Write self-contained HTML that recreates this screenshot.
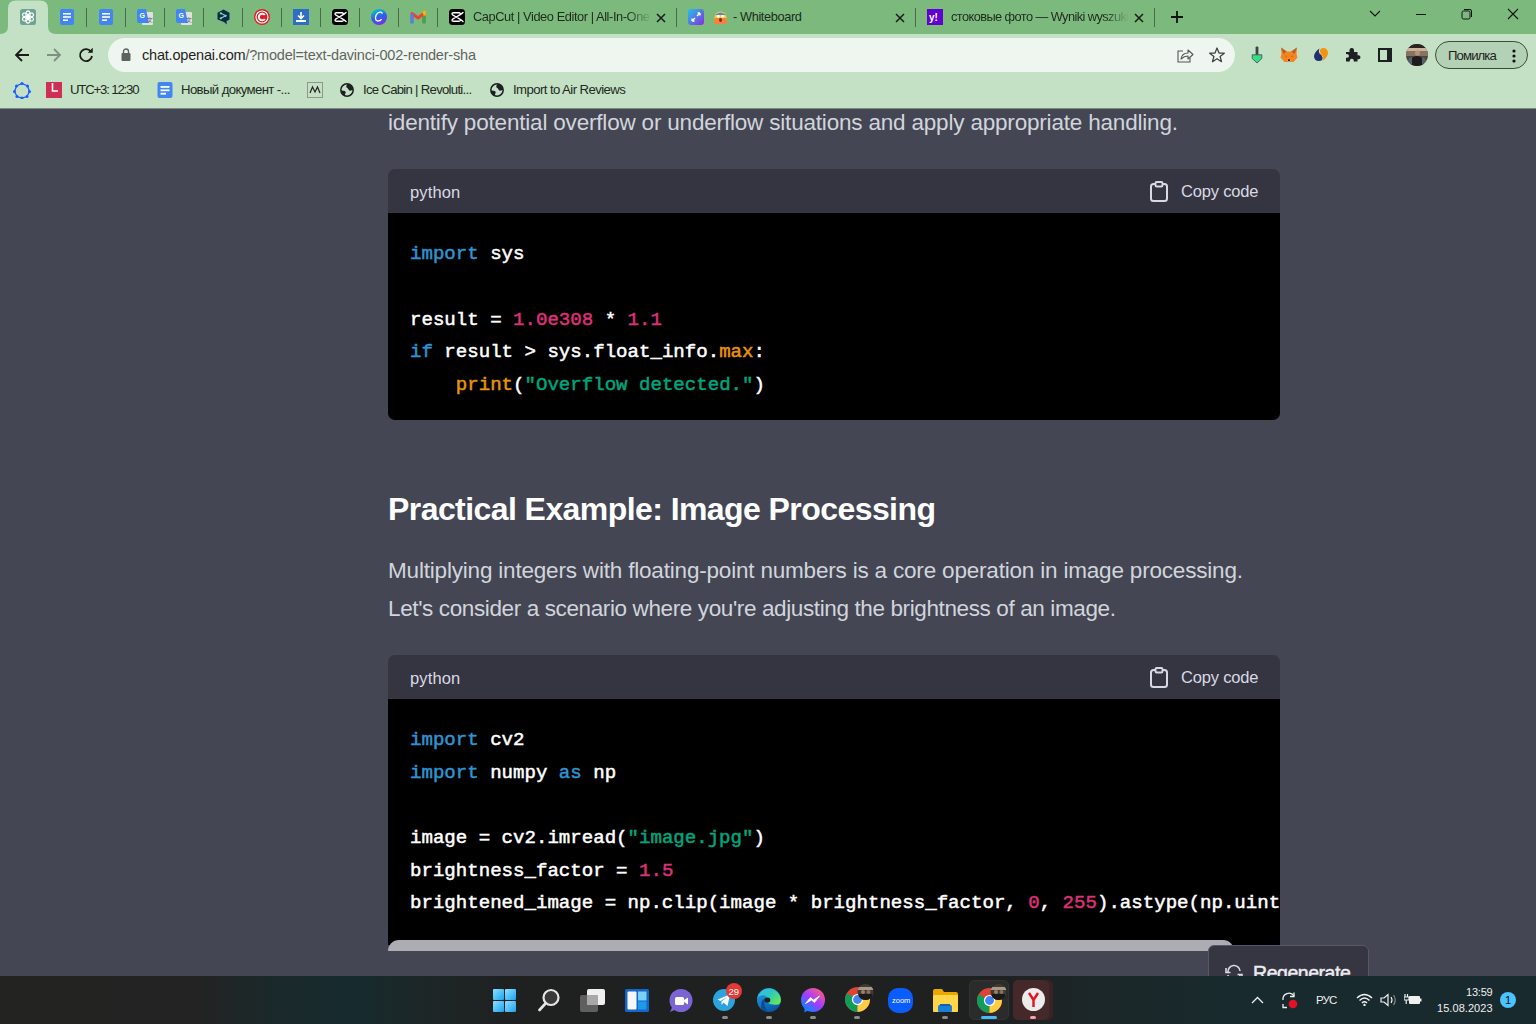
<!DOCTYPE html>
<html><head><meta charset="utf-8">
<style>
*{margin:0;padding:0;box-sizing:border-box}
html,body{width:1536px;height:1024px;overflow:hidden;background:#444654;font-family:"Liberation Sans",sans-serif}
.r{position:absolute;display:block}
.t{position:absolute;white-space:pre}
.kw{color:#2e95d3}.num{color:#df3079}.str{color:#00a67d}.bi{color:#e9950c}
</style></head><body>
<div class="r" style="left:0px;top:0px;width:1536px;height:34px;background:#7bba7c;"></div>
<svg class="r" style="left:0px;top:0px;" width="56" height="34" viewBox="0 0 56 34"><path d="M0 34 Q8 34 8 26 V8.5 Q8 0.5 16 0.5 H40 Q48 0.5 48 8.5 V26 Q48 34 56 34 Z" fill="#c4e1c5"/></svg>
<div class="r" style="left:86px;top:8px;width:1px;height:19px;background:#4a6a4b;"></div>
<div class="r" style="left:125px;top:8px;width:1px;height:19px;background:#4a6a4b;"></div>
<div class="r" style="left:164px;top:8px;width:1px;height:19px;background:#4a6a4b;"></div>
<div class="r" style="left:203px;top:8px;width:1px;height:19px;background:#4a6a4b;"></div>
<div class="r" style="left:242px;top:8px;width:1px;height:19px;background:#4a6a4b;"></div>
<div class="r" style="left:281px;top:8px;width:1px;height:19px;background:#4a6a4b;"></div>
<div class="r" style="left:320px;top:8px;width:1px;height:19px;background:#4a6a4b;"></div>
<div class="r" style="left:359px;top:8px;width:1px;height:19px;background:#4a6a4b;"></div>
<div class="r" style="left:398px;top:8px;width:1px;height:19px;background:#4a6a4b;"></div>
<div class="r" style="left:437px;top:8px;width:1px;height:19px;background:#4a6a4b;"></div>
<div class="r" style="left:676px;top:8px;width:1px;height:19px;background:#4a6a4b;"></div>
<div class="r" style="left:915px;top:8px;width:1px;height:19px;background:#4a6a4b;"></div>
<div class="r" style="left:1154px;top:8px;width:1px;height:19px;background:#4a6a4b;"></div>
<svg class="r" style="left:20px;top:9px;" width="16" height="16" viewBox="0 0 16 16"><rect width="16" height="16" rx="2.5" fill="#6fa495"/><g fill="none" stroke="#fff" stroke-width="1.1"><ellipse cx="8" cy="5.3" rx="2.1" ry="3.4" transform="rotate(0 8 8)"/><ellipse cx="8" cy="5.3" rx="2.1" ry="3.4" transform="rotate(60 8 8)"/><ellipse cx="8" cy="5.3" rx="2.1" ry="3.4" transform="rotate(120 8 8)"/><ellipse cx="8" cy="5.3" rx="2.1" ry="3.4" transform="rotate(180 8 8)"/><ellipse cx="8" cy="5.3" rx="2.1" ry="3.4" transform="rotate(240 8 8)"/><ellipse cx="8" cy="5.3" rx="2.1" ry="3.4" transform="rotate(300 8 8)"/></g></svg>
<svg class="r" style="left:59px;top:9px;" width="16" height="16" viewBox="0 0 16 16"><rect x="1" width="14" height="16" rx="2" fill="#4285f4"/><rect x="4" y="4" width="8" height="1.6" fill="#fff"/><rect x="4" y="7.2" width="8" height="1.6" fill="#fff"/><rect x="4" y="10.4" width="5" height="1.6" fill="#fff"/></svg>
<svg class="r" style="left:98px;top:9px;" width="16" height="16" viewBox="0 0 16 16"><rect x="1" width="14" height="16" rx="2" fill="#4285f4"/><rect x="4" y="4" width="8" height="1.6" fill="#fff"/><rect x="4" y="7.2" width="8" height="1.6" fill="#fff"/><rect x="4" y="10.4" width="5" height="1.6" fill="#fff"/></svg>
<svg class="r" style="left:137px;top:9px;" width="16" height="16" viewBox="0 0 16 16"><rect x="5" y="3" width="11" height="13" rx="1" fill="#e0e0e0"/><path d="M0 2 Q0 0 2 0 H9 L12 14 H2 Q0 14 0 12Z" fill="#4285f4"/><text x="2.5" y="9" font-size="7" font-weight="bold" fill="#fff" font-family="Liberation Sans">G</text><text x="9.5" y="13" font-size="6" fill="#555" font-family="Liberation Sans">文</text></svg>
<svg class="r" style="left:176px;top:9px;" width="16" height="16" viewBox="0 0 16 16"><rect x="5" y="3" width="11" height="13" rx="1" fill="#e0e0e0"/><path d="M0 2 Q0 0 2 0 H9 L12 14 H2 Q0 14 0 12Z" fill="#4285f4"/><text x="2.5" y="9" font-size="7" font-weight="bold" fill="#fff" font-family="Liberation Sans">G</text><text x="9.5" y="13" font-size="6" fill="#555" font-family="Liberation Sans">文</text></svg>
<svg class="r" style="left:217px;top:9px;" width="13" height="16" viewBox="0 0 13 16"><path d="M6.5 0.5 L12.5 3.8 V10.5 L9.5 12.2 L9.8 15.5 L7 13 L0.5 10.5 V3.8Z" fill="#0a2b4e"/><path d="M3.8 4.3 L8.6 6.8 L3.8 9.3" stroke="#8fd39a" stroke-width="1.2" fill="none"/><circle cx="3.8" cy="4.3" r="1.1" fill="#8fd39a"/><circle cx="8.6" cy="6.8" r="1.1" fill="#8fd39a"/><circle cx="3.8" cy="9.3" r="1.1" fill="#8fd39a"/></svg>
<svg class="r" style="left:254px;top:9px;" width="16" height="16" viewBox="0 0 16 16"><circle cx="8" cy="8" r="8" fill="#e21c23"/><circle cx="8" cy="8" r="6" fill="none" stroke="#fff" stroke-width="1.2"/><path d="M10.8 6 A3.3 3.3 0 1 0 10.8 10" fill="none" stroke="#fff" stroke-width="2"/></svg>
<svg class="r" style="left:293px;top:9px;" width="16" height="16" viewBox="0 0 16 16"><rect width="16" height="16" fill="#2f6ec7"/><path d="M8 3 V9 M5 6.5 L8 9.5 L11 6.5" stroke="#fff" stroke-width="1.6" fill="none"/><rect x="3" y="11" width="10" height="2" fill="#fff"/></svg>
<svg class="r" style="left:332px;top:9px;" width="16" height="16" viewBox="0 0 16 16"><rect width="16" height="16" rx="3.5" fill="#000"/><path d="M11.3 4.6 Q11 3.7 10 3.7 H4.5 Q3 3.7 3 4.8 Q3 5.6 4 6.2 L7.2 8 L10.4 9.8 Q12.5 11 14 12.4 M11.3 11.4 Q11 12.3 10 12.3 H4.5 Q3 12.3 3 11.2 Q3 10.4 4 9.8 L7.2 8 L10.4 6.2 Q12.5 5 14 3.6" stroke="#fff" stroke-width="1.4" fill="none" stroke-linecap="round"/></svg>
<svg class="r" style="left:371px;top:9px;" width="16" height="16" viewBox="0 0 16 16"><defs><linearGradient id="cg" x1="0.3" y1="0" x2="0.7" y2="1"><stop offset="0" stop-color="#00c4cc"/><stop offset="0.5" stop-color="#2f5ee8"/><stop offset="1" stop-color="#7d2ae8"/></linearGradient></defs><circle cx="8" cy="8" r="8" fill="url(#cg)"/><path d="M11.2 4.8 Q11 2.8 9 3.2 Q5 4 4.5 8.5 Q4.3 12 7 12 Q9 12 10.6 10.2" stroke="#fff" stroke-width="1.3" fill="none"/></svg>
<svg class="r" style="left:410px;top:10px;" width="16" height="14" viewBox="0 0 16 14"><path d="M2 13 V3.5 L8 8 L14 3.5 V13" fill="none" stroke="#ea4335" stroke-width="3" stroke-linejoin="round"/><path d="M2 13.5 V4" stroke="#4285f4" stroke-width="3"/><path d="M14 13.5 V6" stroke="#34a853" stroke-width="3"/><path d="M12.8 3 L14.5 2.2 V5.5" stroke="#fbbc04" stroke-width="2.4" fill="none"/></svg>
<svg class="r" style="left:449px;top:9px;" width="16" height="16" viewBox="0 0 16 16"><rect width="16" height="16" rx="3.5" fill="#000"/><path d="M11.3 4.6 Q11 3.7 10 3.7 H4.5 Q3 3.7 3 4.8 Q3 5.6 4 6.2 L7.2 8 L10.4 9.8 Q12.5 11 14 12.4 M11.3 11.4 Q11 12.3 10 12.3 H4.5 Q3 12.3 3 11.2 Q3 10.4 4 9.8 L7.2 8 L10.4 6.2 Q12.5 5 14 3.6" stroke="#fff" stroke-width="1.4" fill="none" stroke-linecap="round"/></svg>
<div class="r" style="left:440px;top:0;width:212px;height:34px;overflow:hidden;-webkit-mask-image:linear-gradient(90deg,#000 88%,transparent 100%)">
<div class="t" style="left:33px;top:10.66px;font-size:12.8px;line-height:12.8px;color:#1f2a1f;font-family:'Liberation Sans',sans-serif;font-weight:400;letter-spacing:-0.415px;">CapCut | Video Editor | All-In-One Editor</div>
</div>
<svg class="r" style="left:656px;top:12.5px;" width="10" height="10" viewBox="0 0 10 10"><path d="M1 1 L9 9 M9 1 L1 9" stroke="#1a1a1a" stroke-width="1.5"/></svg>
<svg class="r" style="left:688px;top:9px;" width="16" height="16" viewBox="0 0 16 16"><defs><linearGradient id="wg" x1="0" y1="0" x2="1" y2="1"><stop offset="0" stop-color="#1ec6e6"/><stop offset="1" stop-color="#8a2be2"/></linearGradient></defs><rect width="16" height="16" rx="3" fill="url(#wg)"/><path d="M4 12 L7 9 M4 12 V9.5 M4 12 H6.5 M12 4 L9 7 M12 4 V6.5 M12 4 H9.5" stroke="#fff" stroke-width="1.3" fill="none"/></svg>
<svg class="r" style="left:714px;top:11px;" width="13" height="13" viewBox="0 0 13 13"><circle cx="6.5" cy="6.5" r="6" fill="#ffc83d"/><rect x="0" y="7" width="13" height="6" rx="2" fill="#f7813d"/><ellipse cx="6.5" cy="9" rx="1.5" ry="2" fill="#7a2a1a"/><circle cx="4.3" cy="5.3" r="1.4" fill="#fff"/><circle cx="8.7" cy="5.3" r="1.4" fill="#fff"/><path d="M1 4 Q6.5 -1 12 4" fill="#4a8ad8"/></svg>
<div class="t" style="left:733px;top:10.66px;font-size:12.8px;line-height:12.8px;color:#1f2a1f;font-family:'Liberation Sans',sans-serif;font-weight:400;letter-spacing:-0.400px;">- Whiteboard</div>
<svg class="r" style="left:895px;top:12.5px;" width="10" height="10" viewBox="0 0 10 10"><path d="M1 1 L9 9 M9 1 L1 9" stroke="#1a1a1a" stroke-width="1.5"/></svg>
<svg class="r" style="left:927px;top:9px;" width="16" height="16" viewBox="0 0 16 16"><rect width="16" height="16" fill="#6001d2"/><text x="2" y="12" font-size="10" font-weight="bold" fill="#fff" font-family="Liberation Sans">y!</text></svg>
<div class="r" style="left:920px;top:0;width:209px;height:34px;overflow:hidden;-webkit-mask-image:linear-gradient(90deg,#000 88%,transparent 100%)">
<div class="t" style="left:31px;top:10.66px;font-size:12.8px;line-height:12.8px;color:#1f2a1f;font-family:'Liberation Sans',sans-serif;font-weight:400;letter-spacing:-0.575px;">стоковые фото — Wyniki wyszukiwania</div>
</div>
<svg class="r" style="left:1134px;top:12.5px;" width="10" height="10" viewBox="0 0 10 10"><path d="M1 1 L9 9 M9 1 L1 9" stroke="#1a1a1a" stroke-width="1.5"/></svg>
<svg class="r" style="left:1171px;top:11px;" width="12" height="12" viewBox="0 0 12 12"><path d="M6 0 V12 M0 6 H12" stroke="#111" stroke-width="1.8"/></svg>
<svg class="r" style="left:1369px;top:10px;" width="12" height="8" viewBox="0 0 12 8"><path d="M1 1 L6 6 L11 1" stroke="#111" stroke-width="1.1" fill="none"/></svg>
<div class="r" style="left:1416px;top:14px;width:10px;height:1px;background:#111;"></div>
<svg class="r" style="left:1461px;top:8px;" width="12" height="12" viewBox="0 0 12 12"><rect x="1" y="3" width="8" height="8" rx="1.5" fill="none" stroke="#111" stroke-width="1"/><path d="M3 1.5 H9 Q10.5 1.5 10.5 3 V9" fill="none" stroke="#111" stroke-width="1"/></svg>
<svg class="r" style="left:1507px;top:8px;" width="12" height="12" viewBox="0 0 12 12"><path d="M1 1 L11 11 M11 1 L1 11" stroke="#111" stroke-width="1.1"/></svg>
<div class="r" style="left:0px;top:34px;width:1536px;height:74px;background:#c4e1c5;"></div>
<svg class="r" style="left:14px;top:47px;" width="16" height="16" viewBox="0 0 16 16"><path d="M15 8 H2 M8 2 L2 8 L8 14" stroke="#1a1a1a" stroke-width="1.8" fill="none"/></svg>
<svg class="r" style="left:46px;top:47px;" width="16" height="16" viewBox="0 0 16 16"><path d="M1 8 H14 M8 2 L14 8 L8 14" stroke="#7f8f80" stroke-width="1.8" fill="none"/></svg>
<svg class="r" style="left:78px;top:47px;" width="16" height="16" viewBox="0 0 16 16"><path d="M13.2 5 A6 6 0 1 0 14 9" stroke="#1a1a1a" stroke-width="1.8" fill="none"/><path d="M10 5.5 H14.5 V1" fill="#1a1a1a" stroke="#1a1a1a" stroke-width="0.5"/></svg>
<div class="r" style="left:108px;top:38px;width:1127px;height:34px;background:#eff6ef;border-radius:17px"></div>
<svg class="r" style="left:121px;top:48px;" width="10" height="13" viewBox="0 0 10 13"><rect x="0.5" y="5" width="9" height="8" rx="1" fill="#5f635f"/><path d="M2.5 5 V3.5 A2.5 2.5 0 0 1 7.5 3.5 V5" stroke="#5f635f" stroke-width="1.4" fill="none"/></svg>
<div class="t" style="left:142px;top:47.72px;font-size:14.5px;line-height:14.5px;color:#1f1f1f;font-family:'Liberation Sans',sans-serif;font-weight:400;letter-spacing:-0.200px;"><span style="color:#1f1f1f">chat.openai.com</span><span style="color:#5f6660">/?model=text-davinci-002-render-sha</span></div>
<svg class="r" style="left:1176px;top:47px;" width="18" height="16" viewBox="0 0 18 16"><path d="M7 4 H2 V15 H14 V11" stroke="#555" stroke-width="1.1" fill="none"/><path d="M5 12 Q6 6 12 6 V3 L17 7.5 L12 12 V9 Q8 9 5 12Z" stroke="#555" stroke-width="1.1" fill="none" stroke-linejoin="round"/></svg>
<svg class="r" style="left:1209px;top:47px;" width="16" height="16" viewBox="0 0 16 16"><path d="M8 1 L10 6 L15.3 6.2 L11.1 9.5 L12.5 14.7 L8 11.7 L3.5 14.7 L4.9 9.5 L0.7 6.2 L6 6 Z" stroke="#444" stroke-width="1.3" fill="none" stroke-linejoin="round"/></svg>
<svg class="r" style="left:1251px;top:46px;" width="12" height="18" viewBox="0 0 12 18"><rect x="4.6" y="0.5" width="2.8" height="9" rx="1" fill="#3c4448"/><path d="M1.2 8.8 H10.8 V12.5 L6 17 L1.2 12.5Z" fill="#2fe37d" stroke="#5a4a6a" stroke-width="0.9" stroke-linejoin="round"/></svg>
<svg class="r" style="left:1280px;top:47px;" width="18" height="16" viewBox="0 0 18 16"><path d="M1 0.5 L7 4.5 H11 L17 0.5 L16.5 7 L17.5 10.5 L13.5 15 H4.5 L0.5 10.5 L1.5 7Z" fill="#f5841f"/><path d="M1 0.5 L6.5 4.5 L3.5 7Z M17 0.5 L11.5 4.5 L14.5 7Z" fill="#b0602a"/><path d="M7 13 L9 15.5 L11 13Z" fill="#d9c0a8"/><circle cx="9" cy="13.3" r="1" fill="#111"/><path d="M5 9 L7 9.5 M13 9 L11 9.5" stroke="#c06a2a" stroke-width="1"/></svg>
<svg class="r" style="left:1313px;top:47px;" width="16" height="15" viewBox="0 0 16 15"><path d="M6.5 1.5 Q2 4 1 9 Q1 14 6 14 Q10 14 9.5 10.5 Q9 8 6.5 6.5 Q5 4 6.5 1.5Z" fill="#23306e"/><path d="M9.5 13.8 Q14 11 15 6.5 Q15 1 10 1 Q6.5 1.5 7 4.5 Q7.5 7 9.5 8.5 Q11 10.5 9.5 13.8Z" fill="#f7900a"/></svg>
<svg class="r" style="left:1345px;top:47px;" width="16" height="15" viewBox="0 0 16 15"><path d="M1 5 H4.5 Q4 1 6.8 1 Q9.5 1 9 5 H12.5 V8.2 Q15.5 7.8 15.5 10.2 Q15.5 12.6 12.5 12.2 V14.5 H8.8 Q9 11.8 6.8 11.8 Q4.6 11.8 4.8 14.5 H1 V10.8 Q4 11 4 8.9 Q4 6.8 1 7Z" fill="#1e1f22"/></svg>
<svg class="r" style="left:1378px;top:48px;" width="14" height="14" viewBox="0 0 14 14"><rect x="1" y="1" width="12" height="12" fill="none" stroke="#1e1f22" stroke-width="2"/><rect x="9" y="1" width="4" height="12" fill="#1e1f22"/></svg>
<svg class="r" style="left:1406px;top:44px;" width="22" height="22" viewBox="0 0 22 22"><defs><clipPath id="av"><circle cx="11" cy="11" r="11"/></clipPath></defs><g clip-path="url(#av)"><rect width="22" height="22" fill="#4a463c"/><rect y="0" width="22" height="4" fill="#2a2420"/><rect y="4" width="22" height="3" fill="#c8b49a"/><rect y="7" width="22" height="5" fill="#8a7260"/><circle cx="11.5" cy="9" r="2.6" fill="#b89080"/><path d="M4 22 Q4 12 11 12 Q18 12 18 22Z" fill="#1d1d1d"/><path d="M1 22 L3 14 L6 13 L6 22Z M21 22 L19 14 L16 13 L16 22Z" fill="#50646a"/></g></svg>
<div class="r" style="left:1435px;top:41px;width:93px;height:28px;background:#b3d1b5;border:1px solid #3e4a3e;border-radius:14px"></div>
<div class="t" style="left:1448px;top:48.82px;font-size:13.2px;line-height:13.2px;color:#1f1f1f;font-family:'Liberation Sans',sans-serif;font-weight:400;letter-spacing:-0.917px;">Помилка</div>
<svg class="r" style="left:1511px;top:49px;" width="6" height="14" viewBox="0 0 6 14"><circle cx="3" cy="2" r="1.6" fill="#111"/><circle cx="3" cy="7" r="1.6" fill="#111"/><circle cx="3" cy="12" r="1.6" fill="#111"/></svg>
<svg class="r" style="left:13px;top:82px;" width="18" height="17" viewBox="0 0 18 17"><polygon points="9,1.5 14.5,4 16.5,9.5 14,14.5 9,16 4,14.5 1.5,9.5 3.5,4" fill="none" stroke="#1a5cff" stroke-width="1.3"/><g fill="#1a5cff"><circle cx="9" cy="1.5" r="1.5"/><circle cx="14.5" cy="4" r="1.5"/><circle cx="16.5" cy="9.5" r="1.5"/><circle cx="14" cy="14.5" r="1.5"/><circle cx="9" cy="16" r="1.5"/><circle cx="4" cy="14.5" r="1.5"/><circle cx="1.5" cy="9.5" r="1.5"/><circle cx="3.5" cy="4" r="1.5"/></g></svg>
<svg class="r" style="left:46px;top:82px;" width="16" height="16" viewBox="0 0 16 16"><rect width="16" height="16" fill="#cf2f55"/><path d="M6.5 1 V9 H12" stroke="#fff" stroke-width="1.6" fill="none"/></svg>
<div class="t" style="left:70px;top:83.32px;font-size:13.2px;line-height:13.2px;color:#1f2a20;font-family:'Liberation Sans',sans-serif;font-weight:400;letter-spacing:-1.173px;">UTC+3: 12:30</div>
<svg class="r" style="left:157px;top:82px;" width="16" height="16" viewBox="0 0 16 16"><rect x="0.5" width="15" height="16" rx="2" fill="#4285f4"/><rect x="3.5" y="4" width="9" height="1.8" fill="#fff"/><rect x="3.5" y="7.4" width="9" height="1.8" fill="#fff"/><rect x="3.5" y="10.8" width="5.5" height="1.8" fill="#fff"/></svg>
<div class="t" style="left:181px;top:83.32px;font-size:13.2px;line-height:13.2px;color:#1f2a20;font-family:'Liberation Sans',sans-serif;font-weight:400;letter-spacing:-0.622px;">Новый документ -...</div>
<svg class="r" style="left:307px;top:82px;" width="16" height="16" viewBox="0 0 16 16"><rect x="0.5" y="0.5" width="15" height="15" fill="none" stroke="#8a9a8a" stroke-width="1"/><path d="M3 11 L5.5 5 L8 10 L10.5 5 L13 11" stroke="#222" stroke-width="1.2" fill="none"/></svg>
<svg class="r" style="left:340px;top:83px;" width="14" height="14" viewBox="0 0 14 14"><circle cx="7" cy="7" r="6.2" fill="none" stroke="#1e1f22" stroke-width="1.5"/><path d="M7.5 0.8 Q5.8 3 6.3 4.3 Q8 5 8.5 6.5 Q9.5 8.2 10.8 7.6 Q12 7 13.2 7 A6.2 6.2 0 0 0 7.5 0.8Z" fill="#1e1f22"/><path d="M0.8 7.5 Q3.5 7.4 4.9 8 Q6.1 8.8 5.6 10 Q4.6 11 5.2 13 A6.2 6.2 0 0 1 0.8 7.5Z" fill="#1e1f22"/></svg>
<div class="t" style="left:363px;top:83.32px;font-size:13.2px;line-height:13.2px;color:#1f2a20;font-family:'Liberation Sans',sans-serif;font-weight:400;letter-spacing:-0.727px;">Ice Cabin | Revoluti...</div>
<svg class="r" style="left:490px;top:83px;" width="14" height="14" viewBox="0 0 14 14"><circle cx="7" cy="7" r="6.2" fill="none" stroke="#1e1f22" stroke-width="1.5"/><path d="M7.5 0.8 Q5.8 3 6.3 4.3 Q8 5 8.5 6.5 Q9.5 8.2 10.8 7.6 Q12 7 13.2 7 A6.2 6.2 0 0 0 7.5 0.8Z" fill="#1e1f22"/><path d="M0.8 7.5 Q3.5 7.4 4.9 8 Q6.1 8.8 5.6 10 Q4.6 11 5.2 13 A6.2 6.2 0 0 1 0.8 7.5Z" fill="#1e1f22"/></svg>
<div class="t" style="left:513px;top:83.32px;font-size:13.2px;line-height:13.2px;color:#1f2a20;font-family:'Liberation Sans',sans-serif;font-weight:400;letter-spacing:-0.585px;">Import to Air Reviews</div>
<div class="r" style="left:0px;top:108px;width:1536px;height:868px;background:#444654;"></div>
<div class="r" style="left:0px;top:108px;width:1536px;height:1px;background:#7d8a84;"></div>
<div class="t" style="left:388px;top:112.45px;font-size:22.5px;line-height:22.5px;color:#d1d5db;font-family:'Liberation Sans',sans-serif;font-weight:400;letter-spacing:-0.189px;">identify potential overflow or underflow situations and apply appropriate handling.</div>
<div class="r" style="left:388px;top:169px;width:892px;height:44px;background:#343541;border-radius:7px 7px 0 0"></div>
<div class="t" style="left:410px;top:183.53px;font-size:16.5px;line-height:16.5px;color:#d9d9e3;font-family:'Liberation Sans',sans-serif;font-weight:400;letter-spacing:0.140px;">python</div>
<svg class="r" style="left:1150px;top:181px;" width="18" height="21" viewBox="0 0 18 21"><rect x="1" y="3" width="16" height="17" rx="2.5" fill="none" stroke="#d9d9e3" stroke-width="2"/><rect x="5.5" y="1" width="7" height="4.5" rx="1.2" fill="#343541" stroke="#d9d9e3" stroke-width="2"/></svg>
<div class="t" style="left:1181px;top:183.03px;font-size:16.5px;line-height:16.5px;color:#d9d9e3;font-family:'Liberation Sans',sans-serif;font-weight:400;letter-spacing:-0.188px;">Copy code</div>
<div class="r" style="left:388px;top:213px;width:892px;height:207px;background:#000;border-radius:0 0 7px 7px"></div>
<div class="r" style="left:388px;top:213px;width:892px;height:207px;overflow:hidden">
<div class="t" style="left:22px;top:32.38px;font-size:19.08px;line-height:19.08px;color:#fff;font-family:'Liberation Mono',monospace;font-weight:400;-webkit-text-stroke:0.5px;"><span class="kw">import</span> sys</div>
<div class="t" style="left:22px;top:97.58px;font-size:19.08px;line-height:19.08px;color:#fff;font-family:'Liberation Mono',monospace;font-weight:400;-webkit-text-stroke:0.5px;">result = <span class="num">1.0e308</span> * <span class="num">1.1</span></div>
<div class="t" style="left:22px;top:130.18px;font-size:19.08px;line-height:19.08px;color:#fff;font-family:'Liberation Mono',monospace;font-weight:400;-webkit-text-stroke:0.5px;"><span class="kw">if</span> result &gt; sys.float_info.<span class="bi">max</span>:</div>
<div class="t" style="left:22px;top:162.78px;font-size:19.08px;line-height:19.08px;color:#fff;font-family:'Liberation Mono',monospace;font-weight:400;-webkit-text-stroke:0.5px;">    <span class="bi">print</span>(<span class="str">"Overflow detected."</span>)</div>
</div>
<div class="t" style="left:388px;top:492.91px;font-size:32px;line-height:32px;color:#ffffff;font-family:'Liberation Sans',sans-serif;font-weight:700;letter-spacing:-0.571px;">Practical Example: Image Processing</div>
<div class="t" style="left:388px;top:559.95px;font-size:22.5px;line-height:22.5px;color:#d1d5db;font-family:'Liberation Sans',sans-serif;font-weight:400;letter-spacing:-0.190px;">Multiplying integers with floating-point numbers is a core operation in image processing.</div>
<div class="t" style="left:388px;top:598.25px;font-size:22.5px;line-height:22.5px;color:#d1d5db;font-family:'Liberation Sans',sans-serif;font-weight:400;letter-spacing:-0.381px;">Let&#x27;s consider a scenario where you&#x27;re adjusting the brightness of an image.</div>
<div class="r" style="left:388px;top:655px;width:892px;height:44px;background:#343541;border-radius:7px 7px 0 0"></div>
<div class="t" style="left:410px;top:669.53px;font-size:16.5px;line-height:16.5px;color:#d9d9e3;font-family:'Liberation Sans',sans-serif;font-weight:400;letter-spacing:0.140px;">python</div>
<svg class="r" style="left:1150px;top:667px;" width="18" height="21" viewBox="0 0 18 21"><rect x="1" y="3" width="16" height="17" rx="2.5" fill="none" stroke="#d9d9e3" stroke-width="2"/><rect x="5.5" y="1" width="7" height="4.5" rx="1.2" fill="#343541" stroke="#d9d9e3" stroke-width="2"/></svg>
<div class="t" style="left:1181px;top:669.03px;font-size:16.5px;line-height:16.5px;color:#d9d9e3;font-family:'Liberation Sans',sans-serif;font-weight:400;letter-spacing:-0.188px;">Copy code</div>
<div class="r" style="left:388px;top:699px;width:892px;height:400px;background:#000;"></div>
<div class="r" style="left:388px;top:699px;width:892px;height:400px;overflow:hidden">
<div class="t" style="left:22px;top:32.38px;font-size:19.08px;line-height:19.08px;color:#fff;font-family:'Liberation Mono',monospace;font-weight:400;-webkit-text-stroke:0.5px;"><span class="kw">import</span> cv2</div>
<div class="t" style="left:22px;top:64.98px;font-size:19.08px;line-height:19.08px;color:#fff;font-family:'Liberation Mono',monospace;font-weight:400;-webkit-text-stroke:0.5px;"><span class="kw">import</span> numpy <span class="kw">as</span> np</div>
<div class="t" style="left:22px;top:130.18px;font-size:19.08px;line-height:19.08px;color:#fff;font-family:'Liberation Mono',monospace;font-weight:400;-webkit-text-stroke:0.5px;">image = cv2.imread(<span class="str">"image.jpg"</span>)</div>
<div class="t" style="left:22px;top:162.78px;font-size:19.08px;line-height:19.08px;color:#fff;font-family:'Liberation Mono',monospace;font-weight:400;-webkit-text-stroke:0.5px;">brightness_factor = <span class="num">1.5</span></div>
<div class="t" style="left:22px;top:195.38px;font-size:19.08px;line-height:19.08px;color:#fff;font-family:'Liberation Mono',monospace;font-weight:400;-webkit-text-stroke:0.5px;">brightened_image = np.clip(image * brightness_factor, <span class="num">0</span>, <span class="num">255</span>).astype(np.uint8)</div>
</div>
<div class="r" style="left:0px;top:945px;width:1536px;height:31px;background:#444654;"></div>
<div class="r" style="left:388px;top:940px;width:846px;height:22px;background:#acacb2;border-radius:11px"></div>
<div class="r" style="left:0px;top:951px;width:1536px;height:25px;background:#444654;"></div>
<div class="r" style="left:1208px;top:945px;width:161px;height:50px;background:#353641;border:1px solid #565869;border-radius:6px"></div>
<svg class="r" style="left:1225px;top:963.5px;" width="18" height="18" viewBox="0 0 18 18"><path d="M3 8 A6 6 0 0 1 15 7" stroke="#d9d9e3" stroke-width="1.6" fill="none"/><path d="M15 11 A6 6 0 0 1 3 11" stroke="#d9d9e3" stroke-width="1.6" fill="none"/><path d="M1 4 V8.5 H5.5 M17 15 V10.5 H12.5" stroke="#d9d9e3" stroke-width="1.6" fill="none"/></svg>
<div class="t" style="left:1253px;top:964.49px;font-size:19.5px;line-height:19.5px;color:#ececf1;font-family:'Liberation Sans',sans-serif;font-weight:400;-webkit-text-stroke:0.45px;letter-spacing:-0.456px;">Regenerate</div>
<div class="r" style="left:0;top:976px;width:1536px;height:48px;background:linear-gradient(90deg,#232322 0%,#222322 13%,#1a292b 18%,#172b2e 23%,#1d2626 28%,#1f2121 33%,#1f2020 64%,#1b2729 72%,#182a2d 80%,#182a2d 100%)"></div>
<svg class="r" style="left:493px;top:989px;" width="23" height="23" viewBox="0 0 23 23"><defs><linearGradient id="wl" x1="0" y1="0" x2="1" y2="1"><stop offset="0" stop-color="#8ee0ff"/><stop offset="1" stop-color="#1aa3f0"/></linearGradient></defs><rect x="0" y="0" width="11" height="11" rx="1" fill="url(#wl)"/><rect x="12" y="0" width="11" height="11" rx="1" fill="url(#wl)"/><rect x="0" y="12" width="11" height="11" rx="1" fill="url(#wl)"/><rect x="12" y="12" width="11" height="11" rx="1" fill="url(#wl)"/></svg>
<svg class="r" style="left:538px;top:988px;" width="22" height="24" viewBox="0 0 22 24"><circle cx="13" cy="9.5" r="7.5" fill="#3a3a3a" stroke="#e6e6e6" stroke-width="2.2"/><path d="M7.5 15.5 L1.5 22" stroke="#e6e6e6" stroke-width="2.6" stroke-linecap="round"/></svg>
<svg class="r" style="left:580px;top:989px;" width="25" height="23" viewBox="0 0 25 23"><rect x="0" y="6" width="18" height="17" rx="2" fill="#5f5f5f"/><rect x="7" y="0" width="18" height="16" rx="2" fill="#f0f0f0"/><rect x="7" y="6" width="11" height="10" fill="#a8a8a8"/></svg>
<svg class="r" style="left:625px;top:989px;" width="24" height="23" viewBox="0 0 24 23"><rect width="24" height="23" rx="1.5" fill="#1466c9"/><rect x="2.5" y="2.5" width="9" height="18" rx="1" fill="#f6f6f6"/><rect x="13" y="2.5" width="8.5" height="9" fill="#79d2f5"/><rect x="13" y="12.5" width="8.5" height="8" fill="#1b9bea"/></svg>
<svg class="r" style="left:669px;top:989px;" width="24" height="24" viewBox="0 0 24 24"><circle cx="12" cy="11.5" r="11.5" fill="#7b64d4"/><path d="M1 23 L4 16 L8 20Z" fill="#7b64d4"/><rect x="6" y="8" width="9" height="8" rx="1.5" fill="#fff"/><path d="M15 11 L19 8.5 V15.5 L15 13Z" fill="#fff"/></svg>
<svg class="r" style="left:713px;top:989px;" width="22" height="22" viewBox="0 0 22 22"><circle cx="11" cy="11" r="11" fill="#2aa3df"/><path d="M4.5 10.5 L17 5.5 L14.5 17 L10.5 13.5 L8.5 16 L8.5 12.5 L15 7.5 L7.5 12 Z" fill="#fff"/></svg>
<svg class="r" style="left:726px;top:983px;" width="16" height="16" viewBox="0 0 16 16"><circle cx="8" cy="8" r="8" fill="#e53935"/></svg>
<div class="t" style="left:728.5px;top:986.96px;font-size:9.5px;line-height:9.5px;color:#fff;font-family:'Liberation Sans',sans-serif;font-weight:400;">29</div>
<svg class="r" style="left:757px;top:988px;" width="24" height="24" viewBox="0 0 24 24"><defs><linearGradient id="eb" x1="0" y1="0" x2="0.6" y2="1"><stop offset="0" stop-color="#2aa0e8"/><stop offset="1" stop-color="#0b56a6"/></linearGradient><linearGradient id="eg2" x1="0" y1="0" x2="1" y2="0.6"><stop offset="0" stop-color="#33bdf0"/><stop offset="0.55" stop-color="#2ec7c0"/><stop offset="1" stop-color="#62e65a"/></linearGradient></defs><circle cx="12" cy="12" r="12" fill="url(#eb)"/><path d="M4 20 Q6.5 23.5 12 24 Q8 21 7.5 16 Q7.5 12 10 10 Q6 10.5 4.5 14Z" fill="#0a4d96"/><path d="M0.2 10.5 A12 12 0 0 1 24 12 Q23.8 15.5 21.5 16.5 Q17 17.2 13 16 Q9.8 14.8 10.2 11.8 Q10.5 8.8 8 7.5 Q3 6.2 0.2 10.5Z" fill="url(#eg2)"/><ellipse cx="10.5" cy="12" rx="2.8" ry="2.6" fill="#1e1f1f"/></svg>
<svg class="r" style="left:800px;top:988px;" width="26" height="26" viewBox="0 0 26 26"><defs><linearGradient id="mg" x1="0.1" y1="1" x2="0.9" y2="0"><stop offset="0.1" stop-color="#0a84ff"/><stop offset="0.5" stop-color="#a33bff"/><stop offset="0.95" stop-color="#ff5f7e"/></linearGradient></defs><circle cx="13" cy="12" r="12" fill="url(#mg)"/><path d="M4.5 19 L4.5 24.5 L9 22Z" fill="#1a7cff"/><path d="M5.5 15.5 L10.5 9.5 L13.5 12 L19.5 8 L14.5 14.5 L11.5 12 Z" fill="#fff" stroke="#fff" stroke-width="0.8" stroke-linejoin="round"/></svg>
<svg class="r" style="left:845px;top:987px;" width="25" height="25" viewBox="0 0 25 25"><circle cx="12.5" cy="12.5" r="12.5" fill="#db4437"/><path d="M12.5 12.5 L1.7 6.25 A12.5 12.5 0 0 0 12.5 25 Z" fill="#0f9d58"/><path d="M12.5 12.5 L12.5 25 A12.5 12.5 0 0 0 23.3 6.25 Z" fill="#ffcd40"/><circle cx="12.5" cy="12.5" r="5.6" fill="#fff"/><circle cx="12.5" cy="12.5" r="4.4" fill="#4285f4"/></svg>
<svg class="r" style="left:857px;top:984px;" width="17" height="16" viewBox="0 0 17 16"><defs><clipPath id="a857"><circle cx="8.5" cy="8" r="8"/></clipPath></defs><g clip-path="url(#a857)"><rect width="17" height="16" fill="#3e3a34"/><rect y="3" width="17" height="3" fill="#a89a80"/><circle cx="6" cy="8" r="2" fill="#9a8070"/><circle cx="11.5" cy="8" r="2" fill="#8a7060"/><rect x="2" y="10" width="13" height="6" fill="#1a1a1a"/></g></svg>
<svg class="r" style="left:888px;top:988px;" width="25" height="25" viewBox="0 0 25 25"><rect width="25" height="25" rx="10" fill="#0b5cff"/><text x="4" y="14.8" font-size="7.5" fill="#fff" font-family="Liberation Sans">zoom</text></svg>
<svg class="r" style="left:933px;top:989px;" width="25" height="23" viewBox="0 0 25 23"><path d="M0 2 Q0 0 2 0 H9 L11 3 H23 Q25 3 25 5 V21 Q25 23 23 23 H2 Q0 23 0 21Z" fill="#e8a800"/><rect x="0" y="6" width="25" height="17" rx="1" fill="#ffd54a"/><rect x="5" y="16" width="14" height="7" rx="1.5" fill="#1a7fd6"/><rect x="7" y="15" width="10" height="2" fill="#0d62b5"/></svg>
<div class="r" style="left:969px;top:980px;width:40px;height:40px;background:#2b2b2b;border-radius:5px;border:1px solid #333"></div>
<svg class="r" style="left:977px;top:988px;" width="25" height="25" viewBox="0 0 25 25"><circle cx="12.5" cy="12.5" r="12.5" fill="#db4437"/><path d="M12.5 12.5 L1.7 6.25 A12.5 12.5 0 0 0 12.5 25 Z" fill="#0f9d58"/><path d="M12.5 12.5 L12.5 25 A12.5 12.5 0 0 0 23.3 6.25 Z" fill="#ffcd40"/><circle cx="12.5" cy="12.5" r="5.6" fill="#fff"/><circle cx="12.5" cy="12.5" r="4.4" fill="#4285f4"/></svg>
<svg class="r" style="left:990px;top:984px;" width="17" height="16" viewBox="0 0 17 16"><defs><clipPath id="a990"><circle cx="8.5" cy="8" r="8"/></clipPath></defs><g clip-path="url(#a990)"><rect width="17" height="16" fill="#3e3a34"/><rect y="3" width="17" height="3" fill="#a89a80"/><circle cx="6" cy="8" r="2" fill="#9a8070"/><circle cx="11.5" cy="8" r="2" fill="#8a7060"/><rect x="2" y="10" width="13" height="6" fill="#1a1a1a"/></g></svg>
<div class="r" style="left:981px;top:1016px;width:16px;height:3px;background:#47b9f5;border-radius:2px"></div>
<div class="r" style="left:1017px;top:980px;width:36px;height:40px;background:#3b2323;border-radius:5px"></div>
<div class="r" style="left:1013px;top:980px;width:36px;height:40px;background:#452829;border-radius:5px"></div>
<svg class="r" style="left:1022px;top:988px;" width="23" height="23" viewBox="0 0 23 23"><circle cx="11.5" cy="11.5" r="11.5" fill="#ececec"/><path d="M7 5 L11.5 12 L16 5 M11.5 12 V19" stroke="#e0161b" stroke-width="2.4" fill="none"/></svg>
<div class="r" style="left:1030px;top:1016px;width:6px;height:3px;background:#f7a0a8;border-radius:2px"></div>
<div class="r" style="left:722px;top:1016px;width:6px;height:3px;background:#8b8b8b;border-radius:2px"></div>
<div class="r" style="left:766px;top:1016px;width:6px;height:3px;background:#8b8b8b;border-radius:2px"></div>
<div class="r" style="left:810px;top:1016px;width:6px;height:3px;background:#8b8b8b;border-radius:2px"></div>
<div class="r" style="left:854px;top:1016px;width:6px;height:3px;background:#8b8b8b;border-radius:2px"></div>
<div class="r" style="left:942px;top:1016px;width:6px;height:3px;background:#8b8b8b;border-radius:2px"></div>
<svg class="r" style="left:1251px;top:996px;" width="13" height="8" viewBox="0 0 13 8"><path d="M1 7 L6.5 1.5 L12 7" stroke="#eee" stroke-width="1.3" fill="none"/></svg>
<svg class="r" style="left:1280px;top:991px;" width="18" height="18" viewBox="0 0 18 18"><path d="M3 9 A6 6 0 0 1 14 5" stroke="#eee" stroke-width="1.3" fill="none"/><path d="M14 1.5 V5.5 H10" stroke="#eee" stroke-width="1.3" fill="none"/><path d="M3 13 L3 16.5 L7 16.5" stroke="#eee" stroke-width="1.3" fill="none"/><circle cx="13" cy="13" r="4.3" fill="#e81123"/></svg>
<div class="t" style="left:1316px;top:995.26px;font-size:11.5px;line-height:11.5px;color:#f0f0f0;font-family:'Liberation Sans',sans-serif;font-weight:400;letter-spacing:-0.850px;">РУС</div>
<svg class="r" style="left:1356px;top:993px;" width="17" height="13" viewBox="0 0 17 13"><path d="M1 5 Q8.5 -2 16 5 M3.5 7.5 Q8.5 2.5 13.5 7.5 M6 10 Q8.5 7.5 11 10" stroke="#f0f0f0" stroke-width="1.5" fill="none"/><circle cx="8.5" cy="12" r="1.2" fill="#f0f0f0"/></svg>
<svg class="r" style="left:1380px;top:993px;" width="18" height="14" viewBox="0 0 18 14"><path d="M1 5 H4 L8 1.5 V12.5 L4 9 H1Z" stroke="#f0f0f0" stroke-width="1.2" fill="none"/><path d="M11 4 Q13 7 11 10" stroke="#f0f0f0" stroke-width="1.2" fill="none"/><path d="M13.5 2 Q17 7 13.5 12" stroke="#888" stroke-width="1.2" fill="none"/></svg>
<svg class="r" style="left:1404px;top:993px;" width="18" height="13" viewBox="0 0 18 13"><rect x="5" y="3" width="11" height="8" rx="1" fill="#f0f0f0"/><rect x="16" y="5.5" width="1.5" height="3" fill="#f0f0f0"/><path d="M1 4 V1 M3.5 4 V1 M0 4 H5 V7 H0Z M2.2 7 V11" stroke="#f0f0f0" stroke-width="1.2" fill="none"/></svg>
<div class="t" style="left:1466px;top:986.69px;font-size:11px;line-height:11px;color:#f0f0f0;font-family:'Liberation Sans',sans-serif;font-weight:400;letter-spacing:-0.200px;">13:59</div>
<div class="t" style="left:1437px;top:1002.69px;font-size:11px;line-height:11px;color:#f0f0f0;font-family:'Liberation Sans',sans-serif;font-weight:400;letter-spacing:0.056px;">15.08.2023</div>
<svg class="r" style="left:1500px;top:992px;" width="16" height="16" viewBox="0 0 16 16"><circle cx="8" cy="8" r="8" fill="#4cc2ff"/></svg>
<div class="t" style="left:1505px;top:995.19px;font-size:11px;line-height:11px;color:#111;font-family:'Liberation Sans',sans-serif;font-weight:400;">1</div>
</body></html>
